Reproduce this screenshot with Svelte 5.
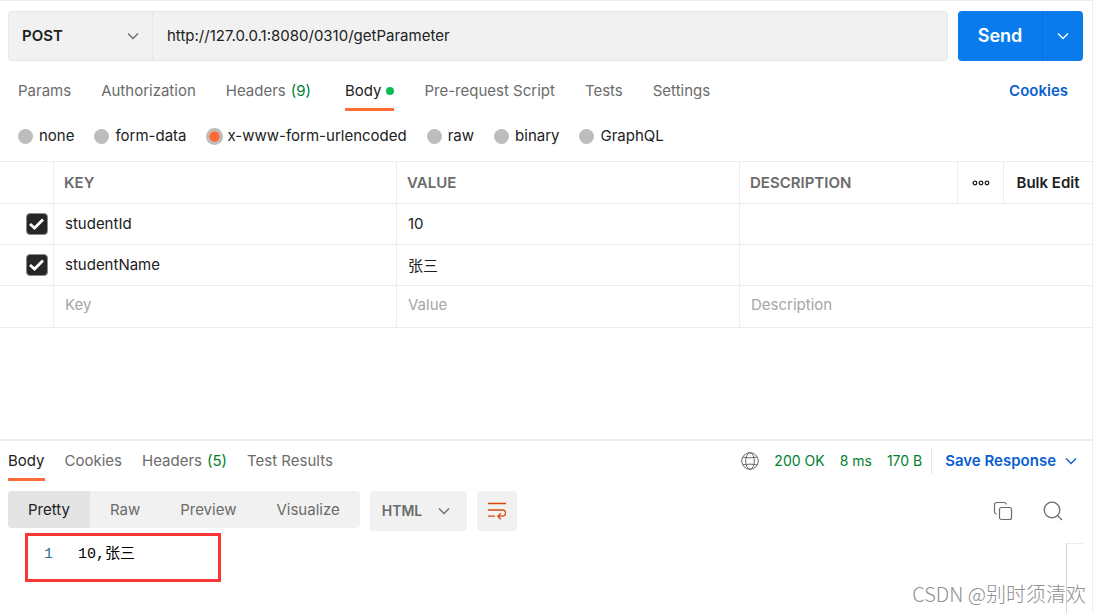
<script>
  let method = $state("POST");
  let url = $state("http://127.0.0.1:8080/0310/getParameter");
  let requestTab = $state("Body");
  let bodyType = $state("x-www-form-urlencoded");
  let responseTab = $state("Body");
  let view = $state("Pretty");
  let language = $state("HTML");

  const requestTabs = [
    { name: "Params" },
    { name: "Authorization" },
    { name: "Headers", count: 9 },
    { name: "Body", dot: true },
    { name: "Pre-request Script" },
    { name: "Tests" },
    { name: "Settings" }
  ];

  const bodyTypes = ["none", "form-data", "x-www-form-urlencoded", "raw", "binary", "GraphQL"];

  let rows = $state([
    { on: true, key: "studentId", value: "10", description: "" },
    { on: true, key: "studentName", value: "张三", description: "" }
  ]);

  const responseTabs = [
    { name: "Body" },
    { name: "Cookies" },
    { name: "Headers", count: 5 },
    { name: "Test Results" }
  ];

  const views = ["Pretty", "Raw", "Preview", "Visualize"];
  const lines = ["10,张三"];
</script>

{#snippet chevron()}
  <svg class="chevron" width="12" height="8" viewBox="0 0 12 8" aria-hidden="true">
    <path d="M1 1.5 6 6.5 11 1.5" fill="none" stroke="currentColor" stroke-width="1.3" />
  </svg>
{/snippet}

<div class="app">
  <section class="request">
    <div class="url-row">
      <div class="url-box">
        <div class="select method">
          <select bind:value={method} aria-label="Method">
            <option>GET</option>
            <option>POST</option>
            <option>PUT</option>
            <option>DELETE</option>
          </select>
          {@render chevron()}
        </div>
        <input class="url" type="text" bind:value={url} aria-label="Request URL" />
      </div>
      <div class="send">
        <button class="send-main">Send</button>
        <button class="send-more" aria-label="Send options">{@render chevron()}</button>
      </div>
    </div>

    <div class="tab-row">
      <nav class="tabs request-tabs">
        {#each requestTabs as tab}
          <button class="tab" class:active={requestTab === tab.name} onclick={() => (requestTab = tab.name)}>
            {tab.name}
            {#if tab.count}<span class="count">({tab.count})</span>{/if}
            {#if tab.dot}<span class="dot"></span>{/if}
          </button>
        {/each}
      </nav>
      <a class="cookies" href="#cookies">Cookies</a>
    </div>

    <div class="body-types">
      {#each bodyTypes as type}
        <label>
          <input type="radio" name="body-type" value={type} bind:group={bodyType} />
          {type}
        </label>
      {/each}
    </div>

    <table>
      <colgroup>
        <col class="col-check" />
        <col />
        <col />
        <col class="col-desc" />
        <col class="col-more" />
        <col class="col-bulk" />
      </colgroup>
      <thead>
        <tr>
          <th></th>
          <th>KEY</th>
          <th>VALUE</th>
          <th>DESCRIPTION</th>
          <th class="center">
            <button class="more" aria-label="More columns">
              <svg width="18" height="6" viewBox="0 0 18 6" fill="none" stroke="currentColor" stroke-width="1.3">
                <circle cx="3" cy="3" r="1.8" />
                <circle cx="9" cy="3" r="1.8" />
                <circle cx="15" cy="3" r="1.8" />
              </svg>
            </button>
          </th>
          <th class="center"><button class="bulk">Bulk Edit</button></th>
        </tr>
      </thead>
      <tbody>
        {#each rows as row}
          <tr>
            <td>
              <label class="check">
                <input type="checkbox" bind:checked={row.on} aria-label="Include {row.key}" />
                <svg width="22" height="22" viewBox="0 0 22 22" aria-hidden="true">
                  <path d="M4 11 8.5 15 17 6.5" fill="none" stroke="#fff" stroke-width="2.8" />
                </svg>
              </label>
            </td>
            <td><input type="text" bind:value={row.key} aria-label="Key" /></td>
            <td><input type="text" bind:value={row.value} aria-label="Value" /></td>
            <td colspan="3"><input type="text" bind:value={row.description} aria-label="Description" /></td>
          </tr>
        {/each}
        <tr class="new-row">
          <td></td>
          <td><input type="text" placeholder="Key" aria-label="New key" /></td>
          <td><input type="text" placeholder="Value" aria-label="New value" /></td>
          <td colspan="3"><input type="text" placeholder="Description" aria-label="New description" /></td>
        </tr>
      </tbody>
    </table>
  </section>

  <section class="response">
    <div class="response-head">
      <nav class="tabs response-tabs">
        {#each responseTabs as tab}
          <button class="tab" class:active={responseTab === tab.name} onclick={() => (responseTab = tab.name)}>
            {tab.name}
            {#if tab.count}<span class="count">({tab.count})</span>{/if}
          </button>
        {/each}
      </nav>
      <div class="status">
        <svg class="globe" width="18" height="18" viewBox="0 0 18 18" fill="none" stroke="currentColor" aria-hidden="true">
          <circle cx="9" cy="9" r="8.3" />
          <ellipse cx="9" cy="9" rx="4.3" ry="8.3" />
          <path d="M1.8 5.2Q9 6.6 16.2 5.2M1.8 12.8Q9 11.4 16.2 12.8" />
        </svg>
        <span>200 OK</span>
        <span>8 ms</span>
        <span>170 B</span>
      </div>
      <button class="save">Save Response {@render chevron()}</button>
    </div>

    <div class="toolbar">
      <div class="segmented">
        {#each views as name}
          <button class:active={view === name} onclick={() => (view = name)}>{name}</button>
        {/each}
      </div>
      <div class="select language">
        <select bind:value={language} aria-label="Response language">
          <option>HTML</option>
          <option>JSON</option>
          <option>XML</option>
          <option>Text</option>
        </select>
        {@render chevron()}
      </div>
      <button class="wrap" aria-label="Wrap lines">
        <svg width="18" height="18" viewBox="0 0 18 18" fill="none" stroke="currentColor" stroke-width="1.3">
          <path d="M0 1.5H18M0 8H14.5A2.8 2.8 0 0 1 14.5 14.2H10M0 14.2H7M12.8 11.2 9.8 14.2 12.8 17.2" />
        </svg>
      </button>
      <div class="tools">
        <button aria-label="Copy">
          <svg width="20" height="20" viewBox="0 0 20 20" fill="none" stroke="currentColor" stroke-width="1.2">
            <rect x="6.5" y="6.5" width="12" height="12" rx="2" />
            <path d="M3.5 13A2 2 0 0 1 1.5 11V3.5A2 2 0 0 1 3.5 1.5H11A2 2 0 0 1 13 3.5" />
          </svg>
        </button>
        <button aria-label="Search">
          <svg width="20" height="20" viewBox="0 0 20 20" fill="none" stroke="currentColor" stroke-width="1.3">
            <circle cx="9" cy="9" r="7.8" />
            <path d="M14.5 14.5 19 19" />
          </svg>
        </button>
      </div>
    </div>

    <div class="editor">
      <div class="code">
        {#each lines as line, i}
          <span class="line-number">{i + 1}</span>
          <code>{line}</code>
        {/each}
      </div>
      <div class="minimap"></div>
    </div>
  </section>

  <div class="watermark">CSDN @别时须清欢</div>
</div>

<style>
  :global(body) {
    background: #fff;
  }

  .app {
    position: relative;
    display: flex;
    flex-direction: column;
    box-sizing: border-box;
    min-height: 100vh;
    margin-right: 9px;
    border-top: 1px solid #ededed;
    border-right: 1px solid #ededed;
    font-family: Inter, "Noto Sans CJK SC", sans-serif;
    font-size: 15px;
    line-height: 20px;
    color: #212121;
  }

  button,
  input,
  select {
    margin: 0;
    padding: 0;
    border: 0;
    background: transparent;
    color: inherit;
    font: inherit;
  }

  button {
    cursor: pointer;
  }

  svg {
    display: block;
  }

  .request {
    height: 438px;
  }

  .url-row {
    display: flex;
    gap: 10px;
    padding: 10px 9px 0 8px;
  }

  .url-box {
    flex: 1;
    display: flex;
    box-sizing: border-box;
    height: 50px;
    border: 1px solid #e6e6e6;
    border-radius: 4px;
    background: #f1f1f1;
  }

  .select {
    position: relative;
    display: flex;
    color: #6b6b6b;
  }

  select {
    appearance: none;
    width: 100%;
    font-weight: 600;
  }

  .select .chevron {
    position: absolute;
    top: 50%;
    right: 13px;
    margin-top: -4px;
    pointer-events: none;
  }

  .method {
    width: 143px;
    border-right: 1px solid #e6e6e6;
  }

  .method select {
    padding-left: 13px;
    color: #212121;
  }

  .url {
    flex: 1;
    padding: 0 14px;
  }

  .send {
    display: flex;
    border-radius: 4px;
    overflow: hidden;
    background: #097bed;
    color: #fff;
  }

  .send-main {
    width: 84px;
    font-size: 18px;
    font-weight: 600;
  }

  .send-more {
    display: flex;
    align-items: center;
    justify-content: center;
    width: 41px;
    border-left: 1px solid #0a6fd6;
  }

  .tab-row {
    display: flex;
    justify-content: space-between;
    height: 50px;
    padding: 0 24px 0 18px;
  }

  .tabs {
    display: flex;
    align-self: stretch;
  }

  .request-tabs {
    gap: 30px;
  }

  .response-tabs {
    gap: 20px;
  }

  .tab {
    display: flex;
    align-items: center;
    gap: 5px;
    padding-top: 3px;
    border-bottom: 3px solid transparent;
    color: #6b6b6b;
    white-space: nowrap;
  }

  .request-tabs .tab {
    padding-top: 13px;
  }

  .tab.active {
    border-color: #ff6c37;
    color: #212121;
  }

  .count {
    color: #007f31;
  }

  .request-tabs .count {
    margin-right: 4px;
  }

  .dot {
    width: 8px;
    height: 8px;
    border-radius: 50%;
    background: #0cbb52;
  }

  .cookies {
    padding-top: 20px;
    color: #0a5fd0;
    font-weight: 600;
    text-decoration: none;
  }

  .body-types {
    display: flex;
    align-items: center;
    gap: 20px;
    height: 50px;
    padding-left: 18px;
  }

  .body-types label {
    display: flex;
    align-items: center;
    gap: 6px;
    white-space: nowrap;
  }

  input[type="radio"] {
    appearance: none;
    width: 15px;
    height: 15px;
    border-radius: 50%;
    background: #bdbdbd;
  }

  input[type="radio"]:checked {
    box-sizing: border-box;
    width: 17px;
    height: 17px;
    margin: 0 -1px;
    border: 3px solid #bdbdbd;
    background: #ff6c37;
    background-clip: padding-box;
  }

  table {
    width: 100%;
    table-layout: fixed;
    border-spacing: 0;
    border-top: 1px solid #ededed;
  }

  .col-check {
    width: 53px;
  }

  .col-desc {
    width: 218px;
  }

  .col-more {
    width: 46px;
  }

  .col-bulk {
    width: 89px;
  }

  th,
  td {
    box-sizing: border-box;
    height: 41px;
    padding: 0 0 2px 11px;
    border-bottom: 1px solid #ededed;
    border-left: 1px solid #ededed;
    text-align: left;
  }

  th {
    height: 42px;
    padding: 0 0 0 10px;
    color: #6b6b6b;
    font-weight: 600;
  }

  .new-row td {
    height: 42px;
    padding-bottom: 4px;
  }

  tr > :first-child {
    border-left: 0;
  }

  td:first-child {
    padding: 0 5px 0 0;
  }

  th.center {
    padding: 0;
    text-align: center;
    color: #212121;
  }

  .more {
    display: block;
    margin: 0 auto;
  }

  td input[type="text"] {
    display: block;
    width: 100%;
    height: 24px;
  }

  input::placeholder {
    color: #a6a6a6;
    opacity: 1;
  }

  .check {
    display: grid;
    justify-content: end;
  }

  .check input,
  .check svg {
    grid-area: 1 / 1;
  }

  .check input {
    appearance: none;
    box-sizing: border-box;
    width: 22px;
    height: 22px;
    border: 1px solid #8c8c8c;
    border-radius: 4px;
  }

  .check input:checked {
    background: #262626;
  }

  .check svg {
    pointer-events: none;
  }

  .response {
    flex: 1;
    display: flex;
    flex-direction: column;
    border-top: 2px solid #ededed;
  }

  .response-head {
    display: flex;
    align-items: center;
    height: 40px;
    padding: 0 15px 0 8px;
  }

  .status {
    display: flex;
    align-items: center;
    gap: 15px;
    margin-left: auto;
    padding-right: 9px;
    color: #007f31;
    font-size: 14px;
  }

  .globe {
    color: #6b6b6b;
  }

  .save {
    display: flex;
    align-items: center;
    gap: 9px;
    height: 25px;
    padding-left: 13px;
    border-left: 1px solid #e6e6e6;
    color: #0a5fd0;
    font-weight: 600;
  }

  .toolbar {
    display: flex;
    align-items: flex-start;
    gap: 10px;
    padding: 10px 29px 0 8px;
  }

  .segmented {
    display: flex;
    height: 37px;
    border-radius: 4px;
    overflow: hidden;
    background: #f1f1f1;
  }

  .segmented button {
    padding: 0 20px;
    color: #6b6b6b;
  }

  .segmented .active {
    background: #e4e4e4;
    color: #212121;
  }

  .language,
  .wrap {
    height: 40px;
    border-radius: 4px;
    background: #f1f1f1;
  }

  .language {
    width: 97px;
  }

  .language select {
    padding-left: 12px;
    font-size: 14px;
  }

  .language .chevron {
    right: 17px;
  }

  .wrap {
    display: flex;
    align-items: center;
    justify-content: center;
    width: 40px;
    color: #d9480f;
  }

  .tools {
    display: flex;
    gap: 30px;
    margin: 10px 0 0 auto;
    color: #6b6b6b;
  }

  .editor {
    flex: 1;
    display: flex;
    justify-content: space-between;
    align-items: flex-start;
    padding: 2px 9px 0 25px;
  }

  .code {
    display: flex;
    box-sizing: border-box;
    width: 196px;
    height: 49px;
    padding: 9px 16px;
    border: 3px solid #fb3636;
    color: #000;
    font-family: "Liberation Mono", "Noto Sans CJK SC", monospace;
  }

  code {
    font: inherit;
  }

  .line-number {
    width: 34px;
    color: #237893;
  }

  .minimap {
    align-self: stretch;
    width: 16px;
    margin-top: 10px;
    border-top: 1px solid #ededed;
    border-left: 1px solid #d4d4d4;
  }

  .watermark {
    position: absolute;
    right: 6px;
    bottom: 7px;
    color: #909090;
    font-family: "Noto Sans CJK SC", sans-serif;
    font-size: 20px;
    font-weight: 300;
    line-height: 24px;
  }
</style>
